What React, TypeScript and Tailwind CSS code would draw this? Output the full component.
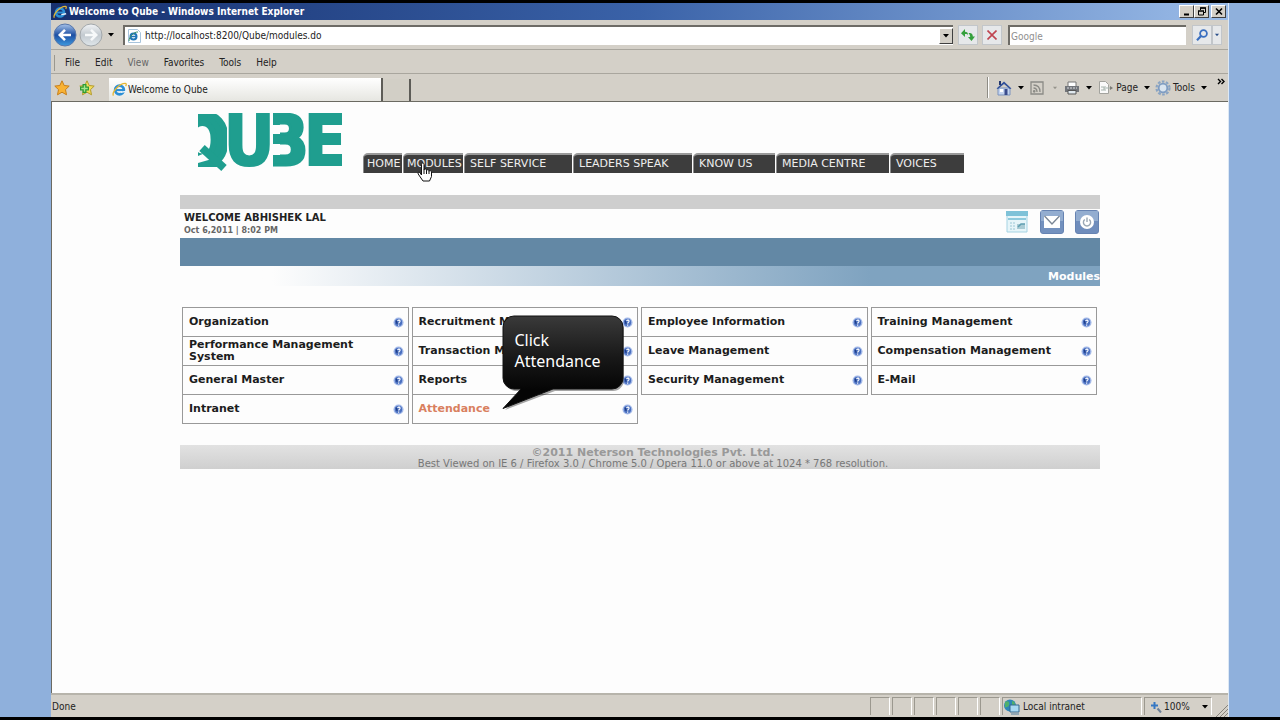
import { useState } from "react";
import type { ReactNode } from "react";

interface NavItem {
  label: string;
  className: string;
}

const menus = ["File", "Edit", "View", "Favorites", "Tools", "Help"];

const navItems: NavItem[] = [
  { label: "HOME", className: "w-[39px] pl-[3px]" },
  { label: "MODULES", className: "w-[60px] pl-[3px]" },
  { label: "SELF SERVICE", className: "w-[108px] pl-[5px]" },
  { label: "LEADERS SPEAK", className: "w-[119px] pl-[5px]" },
  { label: "KNOW US", className: "w-[82px] pl-[5px]" },
  { label: "MEDIA CENTRE", className: "w-[113px] pl-[5px]" },
  { label: "VOICES", className: "w-[74px] pl-[5px]" },
];

const moduleColumns: string[][] = [
  ["Organization", "Performance Management System", "General Master", "Intranet"],
  ["Recruitment Management", "Transaction Management", "Reports", "Attendance"],
  ["Employee Information", "Leave Management", "Security Management"],
  ["Training Management", "Compensation Management", "E-Mail"],
];

function IeIcon({ className }: { className: string }) {
  return (
    <svg viewBox="0 0 16 16" className={className} fill="none" aria-hidden="true">
      <circle cx="8" cy="8.5" r="4.6" stroke="#2b8fd6" strokeWidth="3" />
      <path d="M4 8.6h9" stroke="#2b8fd6" strokeWidth="2.2" />
      <path d="M9.5 11l5.5-1" stroke="#e8f3fb" strokeWidth="1.6" />
      <path d="M1.5 14.5C-.5 11 8 1.500 14 1.500c1.500 0 1.500 1.500.5 3" stroke="#e6b733" strokeWidth="1.4" />
    </svg>
  );
}

function Caret({ className = "fill-black" }: { className?: string }) {
  return (
    <svg viewBox="0 0 6 4" className={`h-[4px] w-[6px] shrink-0 ${className}`} aria-hidden="true">
      <path d="M0 0h6L3 3.500z" />
    </svg>
  );
}

function NavArrow({ direction }: { direction: "back" | "forward" }) {
  const back = direction === "back";
  return (
    <svg viewBox="0 0 24 24" className="size-6" aria-hidden="true">
      <defs>
        <linearGradient id={direction} x1="0" y1="0" x2="0" y2="1">
          <stop offset="0" stopColor={back ? "#a9c4ea" : "#f2f4f6"} />
          <stop offset="0.5" stopColor={back ? "#1d4fa3" : "#c3cad0"} />
          <stop offset="1" stopColor={back ? "#3f9be0" : "#dfe6ea"} />
        </linearGradient>
      </defs>
      <circle cx="12" cy="12" r="11" fill={`url(#${direction})`} stroke={back ? "#5877ab" : "#a2a7aa"} />
      <path
        d={back ? "M18 12H7.500M12 6.800L6.800 12l5.200 5.200" : "M6 12h10.500M12 6.800l5.200 5.200-5.200 5.200"}
        fill="none"
        stroke={back ? "#fff" : "#f7f9fa"}
        strokeWidth="2.600"
      />
    </svg>
  );
}

function WindowButton({ label, children }: { label: string; children: ReactNode }) {
  return (
    <button
      type="button"
      aria-label={label}
      className="flex h-[13px] w-[15px] items-center justify-center border border-t-white border-r-[#404040] border-b-[#404040] border-l-white bg-[#d4d0c8]"
    >
      <svg viewBox="0 0 10 9" className="h-[9px] w-[10px]" fill="none" stroke="#000" aria-hidden="true">
        {children}
      </svg>
    </button>
  );
}

function TitleBar() {
  return (
    <div className="flex h-[17px] items-center bg-linear-to-r from-[#17306f] via-[#3a62a8] to-[#9bbce8] pr-[2px] pl-[2px]">
      <IeIcon className="size-[14px]" />
      <h1 className="ml-[2px] flex-1 text-[10px] leading-[16px] font-bold text-white">
        Welcome to Qube - Windows Internet Explorer
      </h1>
      <WindowButton label="Minimize">
        <path d="M2 7.500h5" strokeWidth="2" />
      </WindowButton>
      <WindowButton label="Restore">
        <path d="M3.500 3V1h5v4.500H7" />
        <path d="M3 1h6M1 4h6" strokeWidth="1.500" />
        <path d="M1.500 4v4h5V4" />
      </WindowButton>
      <span className="w-[2px]" />
      <WindowButton label="Close">
        <path d="M2 1.500l6 6M8 1.500l-6 6" strokeWidth="1.600" />
      </WindowButton>
    </div>
  );
}

function AddressBar() {
  const [url, setUrl] = useState("http://localhost:8200/Qube/modules.do");
  const [query, setQuery] = useState("");
  const box = "flex h-[20px] items-center justify-center border border-[#c2c6ca] bg-[#e6e8ea]";

  return (
    <div className="flex h-[30px] items-center border-b border-[#a9a69e] pt-px pr-[6px] pl-[2px]">
      <button type="button" aria-label="Back">
        <NavArrow direction="back" />
      </button>
      <button type="button" aria-label="Forward" className="ml-[2px]">
        <NavArrow direction="forward" />
      </button>
      <button type="button" aria-label="Recent pages" className="mr-[6px] ml-[5px] flex h-5 items-center">
        <Caret />
      </button>
      <div className="ml-[3px] flex h-[20px] flex-1 items-center border-t-2 border-l-2 border-[#6d6b66] bg-white pl-[2px]">
        <svg viewBox="0 0 14 14" className="size-[14px]" fill="none" aria-hidden="true">
          <path d="M1.500.5h9l3 3v10h-12z" fill="#fff" stroke="#a8c4dc" />
          <circle cx="6.500" cy="7.500" r="3" stroke="#2277b8" strokeWidth="2" />
          <path d="M4 7.500h6" stroke="#2277b8" strokeWidth="1.500" />
          <path d="M2 12C2 8 7 2.500 11 3" stroke="#3c8f6a" />
        </svg>
        <input
          aria-label="Address"
          value={url}
          onChange={(e) => setUrl(e.target.value)}
          className="ml-1 min-w-0 flex-1 text-[10px] leading-4 text-[#222] outline-none"
        />
        <button
          type="button"
          aria-label="Show address list"
          className="flex h-[16px] w-[14px] items-center justify-center border border-t-white border-r-[#404040] border-b-[#404040] border-l-white bg-[#d4d0c8]"
        >
          <Caret />
        </button>
      </div>
      <button type="button" aria-label="Refresh" className={`ml-[5px] w-[20px] ${box}`}>
        <svg viewBox="0 0 14 12" className="h-3 w-[14px]" fill="#35a03c" aria-hidden="true">
          <path d="M0 4.200L4 0v2.800c2 0 3 .7 3 3.200-.8-1-1.500-1.200-3-1v3z" />
          <path d="M14 7.500L10.500 12 7 8h2.200C9 6 8.500 5 7.500 4.200c3-.5 4.300 1 4.300 3.300z" />
        </svg>
      </button>
      <button type="button" aria-label="Stop" className={`ml-[4px] w-[20px] ${box}`}>
        <svg viewBox="0 0 10 10" className="size-[10px]" fill="none" stroke="#c04450" strokeWidth="1.600" aria-hidden="true">
          <path d="M.5.500l9 9M9.500.500l-9 9" />
        </svg>
      </button>
      <input
        aria-label="Search"
        placeholder="Google"
        value={query}
        onChange={(e) => setQuery(e.target.value)}
        className="ml-[6px] h-[20px] w-[178px] border-t-2 border-l-2 border-[#6d6b66] bg-white pl-px text-[10px] outline-none placeholder:text-[#8f8f8f]"
      />
      <button type="button" aria-label="Go" className={`ml-[6px] w-[20px] ${box}`}>
        <svg viewBox="0 0 12 12" className="size-3" fill="none" stroke="#3a6fc0" aria-hidden="true">
          <circle cx="7.500" cy="4.500" r="3.400" strokeWidth="1.800" />
          <path d="M5 7l-4 4.200" strokeWidth="2.200" />
        </svg>
      </button>
      <button type="button" aria-label="Search options" className={`w-[10px] ${box}`}>
        <Caret className="scale-75 fill-[#2b4f8a]" />
      </button>
    </div>
  );
}

function MenuBar() {
  return (
    <nav className="flex h-[24px] items-center border-b border-[#a9a69e] pt-[2px] pl-[3px]">
      <span className="mr-[10px] h-4 w-px bg-[#9b988f]" />
      <div className="flex gap-[15px]">
        {menus.map((menu) => (
          <button
            key={menu}
            type="button"
            className={`text-[10px] leading-4 ${menu === "View" ? "text-[#666]" : "text-[#222]"}`}
          >
            {menu}
          </button>
        ))}
      </div>
    </nav>
  );
}

function Star({ plus = false }: { plus?: boolean }) {
  return (
    <svg viewBox="0 0 16 16" className="size-4" aria-hidden="true">
      <path
        d="M8 .8l2.200 4.700 5 .6-3.700 3.500 1 5.200L8 12.200l-4.500 2.600 1-5.200L.8 6.100l5-.6z"
        fill={plus ? "#f3dd5a" : "#f9b233"}
        stroke={plus ? "#b39a2c" : "#c77e18"}
      />
      {plus && <path d="M5.500 4v9M1 8.500h9" stroke="#2c9b35" strokeWidth="4" />}
      {plus && <path d="M5.500 5.200v6.600M2.200 8.500h6.600" stroke="#a7e58d" strokeWidth="1.400" />}
    </svg>
  );
}

function TabBar() {
  return (
    <div className="flex h-[28px] items-center border-b border-[#6b6a62] pr-[3px] pl-[3px]">
      <button type="button" aria-label="Favorites Center">
        <Star />
      </button>
      <button type="button" aria-label="Add to Favorites" className="ml-[9px]">
        <Star plus />
      </button>
      <button
        type="button"
        className="ml-[14px] flex h-[23px] w-[274px] items-center self-end border-r-2 border-[#5d5c57] bg-linear-to-b from-white to-[#e6e6e1] pl-[3px] text-[10px] text-[#222]"
      >
        <IeIcon className="size-[15px]" />
        <span className="ml-px">Welcome to Qube</span>
      </button>
      <button
        type="button"
        aria-label="New tab"
        className="h-[22px] w-[28px] self-end border-r-2 border-[#5d5c57] bg-[#d2cfc6]"
      />
      <div className="ml-auto flex items-center text-[10px] text-[#222]">
        <span className="h-[21px] w-[2px] border-l border-[#8e8c85] bg-white" />
        <button type="button" aria-label="Home" className="ml-[7px] flex items-center gap-[6px]">
          <svg viewBox="0 0 16 16" className="size-4" aria-hidden="true">
            <path d="M2 8h12v7H2z" fill="#c5d5f0" stroke="#7b92bd" />
            <path d="M.5 8.500L8 1.500l7.500 7-1.500.5L8 4 2 9z" fill="#32519a" />
            <path d="M3 1h2v4H3z" fill="#23376d" />
            <path d="M8.500 9h3v6h-3z" fill="#3a4c8c" />
            <path d="M4 9h3v3H4z" fill="#fff" />
          </svg>
          <Caret />
        </button>
        <button type="button" aria-label="Feeds" className="ml-[6px] flex items-center gap-[8px]">
          <svg viewBox="0 0 14 14" className="size-[14px]" fill="none" stroke="#8b8b86" strokeWidth="1.300" aria-hidden="true">
            <path d="M1 1h12v12H1zM3.500 4c4 0 6.500 2.500 6.500 7M3.500 7c2 0 3.500 1.500 3.500 4" />
            <circle cx="4.200" cy="10.300" r=".7" />
          </svg>
          <Caret className="scale-75 fill-[#96948c]" />
        </button>
        <button type="button" aria-label="Print" className="ml-[6px] flex items-center gap-[6px]">
          <svg viewBox="0 0 16 14" className="h-[14px] w-4" aria-hidden="true">
            <path d="M4 1h8v5H4z" fill="#fff" stroke="#777" />
            <path d="M1 5h14v6H1z" fill="#72757a" />
            <path d="M3 7h10" stroke="#d9dde0" strokeDasharray="2 1" />
            <path d="M4 9.500h8v3.500H4z" fill="#dfe8ee" stroke="#555" />
          </svg>
          <Caret />
        </button>
        <button type="button" className="ml-[6px] flex items-center">
          <svg viewBox="0 0 15 15" className="size-[15px]" fill="none" aria-hidden="true">
            <path d="M1.500 1.500h6l3 3v9h-9z" fill="#fafafa" stroke="#a3a39e" />
            <path d="M3 7h3v3H3M7 6v5M8 8h5" stroke="#a6b3ad" />
            <path d="M12 6l3 2-3 2z" fill="#7b7b76" />
          </svg>
          <span className="mr-[6px] ml-[3px]">Page</span>
          <Caret />
        </button>
        <button type="button" className="ml-[5px] flex items-center">
          <svg viewBox="0 0 16 16" className="size-4" fill="none" aria-hidden="true">
            <circle cx="8" cy="8" r="6.500" stroke="#8aa4c3" strokeWidth="2.200" strokeDasharray="2.600 1.500" />
            <circle cx="8" cy="8" r="4.300" fill="#d9e4ef" stroke="#7e9cc2" strokeWidth="1.800" />
          </svg>
          <span className="mr-[6px] ml-[2px]">Tools</span>
          <Caret />
        </button>
        <button type="button" aria-label="More" className="mb-3 ml-[10px]">
          <svg viewBox="0 0 8 7" className="h-[7px] w-2" fill="none" stroke="#000" strokeWidth="1.400" aria-hidden="true">
            <path d="M1 1l2.500 2.500L1 6M4.500 1L7 3.500 4.500 6" />
          </svg>
        </button>
      </div>
    </div>
  );
}

/* The left of the Q and the stem of the B are cut away. */
function QubeLogo() {
  return (
    <svg
      viewBox="0 0 144 58"
      className="h-[58px] w-[144px] overflow-hidden font-['DejaVu_Sans_Condensed','DejaVu_Sans',sans-serif] font-bold [font-stretch:condensed]"
      role="img"
      aria-label="Qube"
    >
      <clipPath id="cut-q">
        <path d="M0 1h29v53H0z" />
      </clipPath>
      <clipPath id="cut-b">
        <path d="M75 0h35v12H75zM82 12h28v9H82zM75 21h35v10H75zM82 31h28v11H82zM75 42h35v16H75z" />
      </clipPath>
      <g fontSize="69" fill="#1f9e8f" stroke="#1f9e8f" strokeWidth="2">
        <text x="-22" y="52" strokeWidth="6" clipPath="url(#cut-q)">
          Q
        </text>
        <text x="26" y="52">
          U
        </text>
        <text x="63" y="52" strokeWidth="3" clipPath="url(#cut-b)">
          B
        </text>
        <text x="106" y="52">
          E
        </text>
      </g>
      <path d="M0 43l7-3 7 6-14 4z" fill="#fdfdfd" />
      <path d="M4 35l22 20" stroke="#1f9e8f" strokeWidth="8" />
    </svg>
  );
}

function HandCursor() {
  return (
    <svg
      viewBox="0 0 16 20"
      className="pointer-events-none absolute top-[9px] left-[14px] h-5 w-4"
      fill="#fff"
      stroke="#111"
      strokeLinejoin="round"
      aria-hidden="true"
    >
      <path d="M4.500 13V2.500c0-2 2.500-2 2.500 0V8c0-1.500 2.500-1.500 2.500 0v.8c0-1.500 2.500-1.500 2.500 0v.7c0-1.500 2.500-1 2.500.5v4.500L12.500 19H6L1.200 12c-.8-1.500.8-2.500 1.800-1.300z" />
      <path d="M7 8v4M9.500 9v3M12 9.500V12" />
    </svg>
  );
}

function SiteHeader() {
  return (
    <header className="flex items-start pt-[11px] pl-[18px]">
      <QubeLogo />
      <nav className="mt-[40px] ml-[21px] flex gap-px">
        {navItems.map((item) => (
          <div key={item.label} className="relative">
            <a
              href="#"
              className={`block h-5 rounded-tl-[5px] border-t-2 border-l border-t-[#9a9a9a] border-l-[#8a8a8a] bg-[#3d3d3d] text-[11px] leading-[17px] whitespace-nowrap text-[#eee] ${item.className}`}
            >
              {item.label}
            </a>
            {item.label === "MODULES" && <HandCursor />}
          </div>
        ))}
      </nav>
    </header>
  );
}

function UserBar() {
  return (
    <div className="flex h-[29px] items-start pt-px pr-px pl-[4px]">
      <div className="flex-1 pt-px">
        <p className="text-[10px] leading-[14px] font-bold text-[#222]">WELCOME ABHISHEK LAL</p>
        <p className="text-[8px] leading-[12px] font-bold text-[#666]">Oct 6,2011 | 8:02 PM</p>
      </div>
      <div className="flex gap-[11px]">
        <button type="button" aria-label="Calendar">
          <svg viewBox="0 0 24 24" className="size-6" fill="none" aria-hidden="true">
            <path d="M2 2h20v20H2z" fill="#e6f5f9" stroke="#a5d3e3" />
            <path d="M1 1h22v5H1z" fill="#7fc2d8" />
            <path d="M3 9h18" stroke="#8fcadd" strokeWidth="2" />
            <path d="M5 13h5M5 16h5M5 19h5" stroke="#9cc8d6" strokeDasharray="2 1" />
            <path d="M12 14h8v5h-8z" fill="#a9cbd4" />
            <path d="M13 17l3-3h4" stroke="#5f9fb1" strokeWidth="1.500" />
          </svg>
        </button>
        <button type="button" aria-label="Mail">
          <svg viewBox="0 0 24 24" className="size-6" fill="none" aria-hidden="true">
            <rect x=".5" y=".5" width="23" height="23" rx="2.500" fill="#7391be" stroke="#6683b2" />
            <path d="M1 1h22v10H1z" fill="#93add0" />
            <path d="M4 6h16v12H4z" fill="#fff" />
            <path d="M4.500 6l7.500 8 7.500-8" stroke="#7b8796" strokeWidth="1.400" />
          </svg>
        </button>
        <button type="button" aria-label="Log out">
          <svg viewBox="0 0 24 24" className="size-6" fill="none" aria-hidden="true">
            <rect x=".5" y=".5" width="23" height="23" rx="2.500" fill="#6f8dbc" stroke="#6683b2" />
            <path d="M1 1h22v10H1z" fill="#93add0" />
            <circle cx="12" cy="12" r="7" fill="#fff" />
            <path d="M9.800 9.500a3.600 3.600 0 104.400 0M12 7.500v4.500" stroke="#9aa7b4" strokeWidth="1.400" />
          </svg>
        </button>
      </div>
    </div>
  );
}

function HelpIcon() {
  return (
    <svg viewBox="0 0 12 12" className="size-[11px]" fill="none" aria-hidden="true">
      <circle cx="6" cy="6" r="5.500" fill="#a3b9e8" />
      <circle cx="6" cy="6" r="4" fill="#4a70c0" />
      <path d="M3.500 4l1 3.500" stroke="#1f3d86" strokeWidth="1.500" />
      <path d="M5 4.200C6 2.600 8.200 3.500 7.500 5.200 7 6 6.200 6.200 6.200 7.200M6.200 8.300v1.200" stroke="#fff" strokeWidth="1.300" />
    </svg>
  );
}

function Callout() {
  return (
    <div className="pointer-events-none absolute top-[8px] left-[90px] h-[98px] w-[124px] font-['Noto_Sans','Open_Sans',sans-serif]">
      <svg viewBox="0 0 124 98" className="absolute inset-0 h-full w-full" aria-hidden="true">
        <defs>
          <linearGradient id="callout" x1="0" y1="0" x2="0" y2="1">
            <stop offset="0" stopColor="#3a3a3a" />
            <stop offset="0.45" stopColor="#181818" />
            <stop offset="0.8" stopColor="#050505" />
          </linearGradient>
        </defs>
        <path
          d="M12 3h98a12 12 0 0112 12v50a11 11 0 01-11 11H53L3 95l19-19h-9A11 11 0 013 65V14A11 11 0 0112 3z"
          fill="#000"
          opacity=".35"
        />
        <path
          d="M12 1h98a11 11 0 0111 11v51a11 11 0 01-11 11H51L1 93.500 19 74h-7A11 11 0 011 63V12A11 11 0 0112 1z"
          fill="url(#callout)"
          stroke="#111"
        />
      </svg>
      <p className="relative pt-[15px] pl-[13px] text-[16px] leading-[21px] text-white">
        Click
        <br />
        Attendance
      </p>
    </div>
  );
}

function ModuleGrid() {
  return (
    <div className="mt-[21px] grid grid-cols-4 items-start gap-[3px] pr-[3px] pl-[2px]">
      {moduleColumns.map((column) => (
        <div key={column[0]} className="relative">
          <ul className="border-t border-r border-l border-[#999]">
            {column.map((name) => (
              <li key={name} className="flex min-h-[29px] items-center border-b border-[#999] pr-[4px] pl-[6px]">
                <a
                  href="#"
                  className={`max-w-[188px] text-[11px] leading-[12px] font-bold ${name === "Attendance" ? "text-[#d9805f]" : "text-[#1c1c1c]"}`}
                >
                  {name}
                </a>
                <button type="button" aria-label={`Help: ${name}`} className="ml-auto">
                  <HelpIcon />
                </button>
              </li>
            ))}
          </ul>
          {column.includes("Attendance") && <Callout />}
        </div>
      ))}
    </div>
  );
}

function StatusBar() {
  const pane = "h-[18px] border-t border-l border-[#9b988f] border-r border-r-white";
  return (
    <footer className="flex h-[24px] items-center border-t-2 border-[#b7b4ab] text-[10px] text-[#222]">
      <span className="flex-1 pl-px">Done</span>
      {[0, 1, 2, 3, 4, 5].map((i) => (
        <span key={i} className={`mr-[2px] w-[20px] ${pane}`} />
      ))}
      <span className={`flex w-[140px] items-center ${pane}`}>
        <svg viewBox="0 0 17 16" className="h-4 w-[17px]" aria-hidden="true">
          <circle cx="7" cy="6.500" r="6" fill="#2f86b8" />
          <path d="M2 3c3-2 5 0 4 3s-3 1-4 3zM9 2c2 0 3 2 3 4l-3 1z" fill="#4fb06c" />
          <path d="M7 6h9v7H7z" fill="#a8d8f2" stroke="#34688f" />
          <path d="M8 15h8" stroke="#7b98ab" strokeWidth="1.500" />
        </svg>
        <span className="ml-[3px]">Local intranet</span>
      </span>
      <button type="button" className={`ml-[2px] flex w-[68px] items-center pr-[3px] ${pane}`}>
        <svg viewBox="0 0 12 12" className="ml-[5px] size-3" fill="none" aria-hidden="true">
          <path d="M4.500 1v7M1 4.500h7" stroke="#3678c4" strokeWidth="2" />
          <path d="M7.500 7.500L11 11.500" stroke="#6b7f99" strokeWidth="2" />
        </svg>
        <span className="mr-auto ml-[2px]">100%</span>
        <Caret />
      </button>
      <svg viewBox="0 0 13 13" className="ml-[3px] size-[13px] self-end" stroke="#86837b" aria-hidden="true">
        <path d="M1 13L13 1M5 13l8-8M9 13l4-4" />
      </svg>
    </footer>
  );
}

export default function App() {
  return (
    <div className="flex min-h-screen flex-col border-y-[3px] border-black bg-[#8fb0dc] px-[51px]">
      <div className="flex flex-1 flex-col border-r border-[#dce8f5] bg-[#d4d0c8] font-['DejaVu_Sans_Condensed','DejaVu_Sans',sans-serif] [font-stretch:condensed]">
        <TitleBar />
        <AddressBar />
        <MenuBar />
        <TabBar />
        <main className="flex-1 border-l border-[#6b6a62] bg-[#fdfdfd] font-['DejaVu_Sans',Verdana,sans-serif] [font-stretch:normal]">
          <div className="mx-auto w-full max-w-[920px]">
            <SiteHeader />
            <div className="mt-[22px] h-[14px] bg-[#cecece]" />
            <UserBar />
            <div className="h-[28px] bg-[#6388a5]" />
            <h2 className="bg-linear-to-r from-[#fdfdfd] from-10% to-[#7fa3c0] to-75% pt-px text-right text-[11px] leading-[19px] font-bold text-white">
              Modules
            </h2>
            <ModuleGrid />
            <div className="mt-[21px] bg-linear-to-b from-[#e2e2e2] to-[#cfcfcf] pt-px pl-[26px] text-center">
              <p className="text-[11px] leading-[13px] font-bold text-[#999]">©2011 Neterson Technologies Pvt. Ltd.</p>
              <p className="text-[10px] leading-[10px] text-[#777]">
                Best Viewed on IE 6 / Firefox 3.0 / Chrome 5.0 / Opera 11.0 or above at 1024 * 768 resolution.
              </p>
            </div>
          </div>
        </main>
        <StatusBar />
      </div>
    </div>
  );
}
